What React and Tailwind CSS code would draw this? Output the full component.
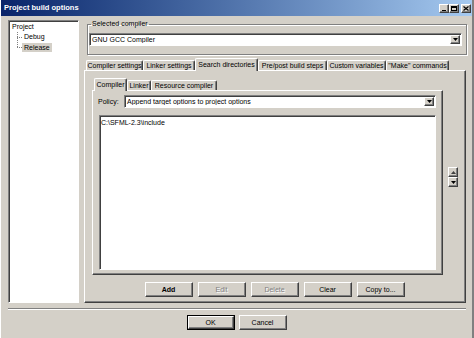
const raised =
  "border border-t-white border-l-white border-r-[#404040] border-b-[#404040] shadow-[inset_-1px_-1px_0_#808080]";
const sunken =
  "border border-t-[#808080] border-l-[#808080] border-r-white border-b-white shadow-[inset_1px_1px_0_#404040]";

function DownArrow() {
  return (
    <svg width="5" height="3" viewBox="0 0 5 3">
      <path d="M0 0H5L2.5 3Z" fill="#000" />
    </svg>
  );
}

function Combo({ text, className }) {
  return (
    <div className={`h-[13px] bg-white flex items-center ${sunken} ${className}`}>
      <span className="flex-1 pl-[2px] leading-none whitespace-nowrap overflow-hidden">{text}</span>
      <div className={`w-[10px] h-[9px] mr-[1px] bg-[#d4d0c8] flex items-center justify-center ${raised}`}>
        <DownArrow />
      </div>
    </div>
  );
}

function TitleBtn({ children, className = "" }) {
  return (
    <div className={`w-[10px] h-[9px] bg-[#d4d0c8] flex items-center justify-center ${raised} ${className}`}>
      {children}
    </div>
  );
}

function Tab({ label, w, selected }) {
  if (selected) {
    return (
      <div
        style={{ width: w }}
        className="relative z-10 h-[13px] bg-[#d4d0c8] border-t border-l border-r border-t-white border-l-white border-r-[#404040] rounded-t-[2px] shadow-[inset_-1px_0_0_#808080] flex justify-center pt-[2px] leading-[8px] whitespace-nowrap"
      >
        {label}
      </div>
    );
  }
  return (
    <div
      style={{ width: w }}
      className="h-[10px] mb-[1px] bg-[#d4d0c8] border-t border-l border-r border-t-white border-l-white border-r-[#404040] rounded-t-[2px] shadow-[inset_-1px_0_0_#808080] flex justify-center pt-[1px] leading-[8px] whitespace-nowrap"
    >
      {label}
    </div>
  );
}

function Button({ label, disabled, bold, def, className = "" }) {
  return (
    <div
      className={`w-[48px] h-[15px] bg-[#d4d0c8] flex items-center justify-center leading-none ${
        def ? "border border-black" : ""
      } ${className}`}
    >
      <div className={`w-full h-full flex items-center justify-center ${raised}`}>
        <span
          className={`${disabled ? "text-[#808080] [text-shadow:1px_1px_0_#fff]" : "text-black"} ${
            bold ? "font-bold" : ""
          }`}
        >
          {label}
        </span>
      </div>
    </div>
  );
}

export default function App() {
  return (
    <div className="w-[474px] h-[338px] bg-[#d4d0c8] flex flex-col font-['Liberation_Sans',Arial,sans-serif] text-[7px] text-black overflow-hidden border-l border-l-white border-r-2 border-r-[#808080]">
      {/* Title bar */}
      <div className="h-[16px] flex items-center pl-[3px] pr-[1px] bg-linear-to-r from-[#0a246a] to-[#a6caf0]">
        <span className="flex-1 text-white font-bold text-[7.5px] leading-none">Project build options</span>
        <div className="flex items-center">
          <TitleBtn>
            <div className="w-[4px] h-[1px] bg-black mt-[4px] -ml-[1px]" />
          </TitleBtn>
          <TitleBtn>
            <div className="w-[6px] h-[5px] border border-black border-t-2" />
          </TitleBtn>
          <TitleBtn className="ml-[2px]">
            <svg width="6" height="5" viewBox="0 0 6 5">
              <path d="M0.5 0.5L5.5 4.5M5.5 0.5L0.5 4.5" stroke="#000" strokeWidth="1.2" />
            </svg>
          </TitleBtn>
        </div>
      </div>

      {/* Main */}
      <div className="flex pl-[7px] pt-[4px]">
        {/* Tree */}
        <div className={`w-[71px] h-[283px] bg-white ${sunken} pt-[1px] pl-[2px]`}>
          <div className="h-[10px] leading-[10px] pl-[1px]">Project</div>
          <div className="relative">
            <div className="absolute left-[6px] top-0 h-[15px] border-l border-dotted border-[#808080]" />
            <div className="flex items-center h-[10px]">
              <div className="ml-[6px] w-[5px] border-t border-dotted border-[#808080]" />
              <span className="ml-[2px] leading-[10px]">Debug</span>
            </div>
            <div className="flex items-center h-[10px]">
              <div className="ml-[6px] w-[5px] border-t border-dotted border-[#808080]" />
              <span className="ml-[0px] px-[2px] bg-[#d4d0c8] leading-[9px]">Release</span>
            </div>
          </div>
        </div>

        {/* Right */}
        <div className="ml-[5px] w-[382px] flex flex-col">
          <fieldset className="ml-[3px] w-[380px] h-[35px] border border-[#808080] shadow-[inset_1px_1px_0_#fff,1px_1px_0_#fff] px-[1px] pb-[7px]">
            <legend className="ml-[2px] px-[1px] leading-[8px]">Selected compiler</legend>
            <Combo text="GNU GCC Compiler" className="mt-[5px] w-[373px]" />
          </fieldset>

          {/* Tabs */}
          <div className="mt-[3px] h-[13px] flex items-end pl-[2px]">
            <Tab label="Compiler settings" w={57} />
            <Tab label="Linker settings" w={52} />
            <Tab label="Search directories" w={63} selected />
            <Tab label="Pre/post build steps" w={69} />
            <Tab label="Custom variables" w={59} />
            <Tab label={'"Make" commands'} w={63} />
          </div>

          {/* Page */}
          <div className={`-mt-[1px] h-[233px] w-[382px] ${raised} pt-[6px] pl-[7px] flex flex-col`}>
            <div className="h-[14px] flex items-end pl-[2px]">
              <Tab label="Compiler" w={33} selected />
              <Tab label="Linker" w={24} />
              <Tab label="Resource compiler" w={66} />
            </div>
            <div className="flex">
              <div className={`-mt-[1px] w-[351px] h-[185px] ${raised} pt-[4px] pl-[5px]`}>
                <div className="flex items-center">
                  <span className="w-[26px] leading-none">Policy:</span>
                  <Combo text="Append target options to project options" className="w-[312px]" />
                </div>
                <div className={`mt-[7px] ml-[1px] w-[337px] h-[155px] bg-white ${sunken} pl-[1px] pt-[2px]`}>
                  <div className="leading-[9px]">C:\SFML-2.3\include</div>
                </div>
              </div>
              <div className="ml-[5px] mt-[76px] flex flex-col">
                <div className={`w-[10px] h-[10px] bg-[#d4d0c8] flex items-center justify-center ${raised}`}>
                  <svg width="5" height="3" viewBox="0 0 5 3">
                    <path d="M0 3H5L2.5 0Z" fill="#404040" />
                  </svg>
                </div>
                <div className={`w-[10px] h-[10px] bg-[#d4d0c8] flex items-center justify-center ${raised}`}>
                  <DownArrow />
                </div>
              </div>
            </div>
            <div className="mt-[7px] flex justify-center gap-[5px] pr-[8px]">
              <Button label="Add" bold />
              <Button label="Edit" disabled />
              <Button label="Delete" disabled />
              <Button label="Clear" />
              <Button label="Copy to..." />
            </div>
          </div>
        </div>
      </div>

      {/* Separator */}
      <div className="mt-[5px] ml-[7px] w-[458px] h-[2px] border-t border-t-[#808080] border-b border-b-white" />

      {/* OK / Cancel */}
      <div className="mt-[5px] flex justify-center gap-[4px]">
        <Button label="OK" def />
        <Button label="Cancel" />
      </div>
    </div>
  );
}
